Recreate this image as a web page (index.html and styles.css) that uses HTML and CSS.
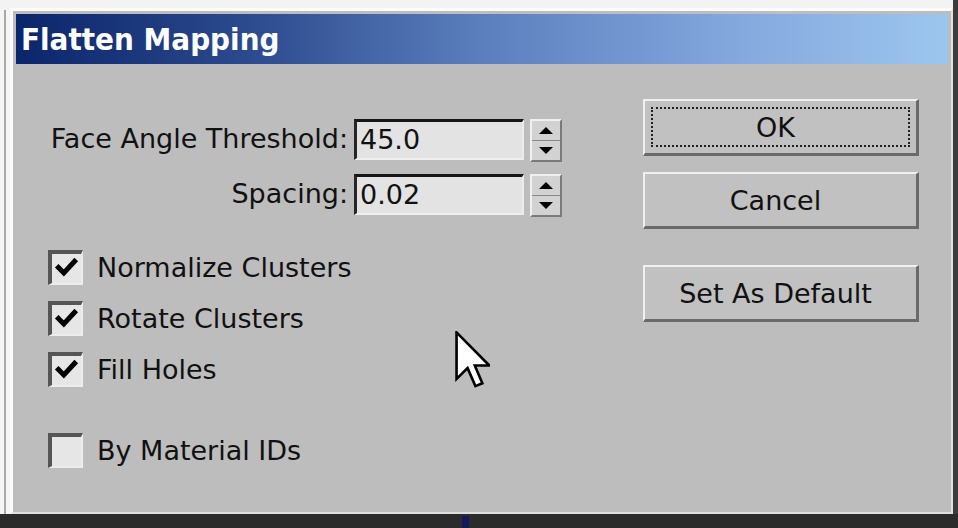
FILE: index.html
```html
<!DOCTYPE html>
<html>
<head>
<meta charset="utf-8">
<title>Flatten Mapping</title>
<link rel="stylesheet" href="styles.css">
</head>
<body>
<div class="screen">
  <div class="main">
    <div class="left-strip"></div>
    <div class="dialog">
      <div class="titlebar"><span class="title">Flatten Mapping</span></div>
      <div class="dialog-body">
        <div class="left-col">
          <div class="form">
            <label class="lbl">Face Angle Threshold:</label>
            <div class="field">45.0</div>
            <div class="spinner">
              <span class="spin-up"><span class="tri-up"></span></span>
              <span class="spin-down"><span class="tri-down"></span></span>
            </div>
            <label class="lbl">Spacing:</label>
            <div class="field">0.02</div>
            <div class="spinner">
              <span class="spin-up"><span class="tri-up"></span></span>
              <span class="spin-down"><span class="tri-down"></span></span>
            </div>
          </div>
          <div class="checks">
            <div class="check-row"><span class="box"><svg viewBox="0 0 14 14" class="tick"><path d="M2.5 6.5 L5.5 9.5 L11.5 3" fill="none" stroke="#000" stroke-width="2.8" stroke-linecap="square"/></svg></span><span class="clabel">Normalize Clusters</span></div>
            <div class="check-row"><span class="box"><svg viewBox="0 0 14 14" class="tick"><path d="M2.5 6.5 L5.5 9.5 L11.5 3" fill="none" stroke="#000" stroke-width="2.8" stroke-linecap="square"/></svg></span><span class="clabel">Rotate Clusters</span></div>
            <div class="check-row"><span class="box"><svg viewBox="0 0 14 14" class="tick"><path d="M2.5 6.5 L5.5 9.5 L11.5 3" fill="none" stroke="#000" stroke-width="2.8" stroke-linecap="square"/></svg></span><span class="clabel">Fill Holes</span></div>
            <div class="check-row spaced"><span class="box"></span><span class="clabel">By Material IDs</span></div>
          </div>
        </div>
        <div class="right-col">
          <button class="btn btn-default"><span class="focus">OK</span></button>
          <button class="btn">Cancel</button>
          <button class="btn btn-gap">Set As Default</button>
        </div>
      </div>
    </div>
    <div class="right-strip"></div>
  </div>
  <div class="taskbar"><span class="task-mark"></span></div>
</div>
<svg class="cursor" viewBox="0 0 12 20" width="35" height="58"><path d="M0.5 0.5 L0.5 16.5 L4.3 12.8 L7 19 L9.4 18 L6.8 11.9 L11.8 11.9 Z" fill="#fff" stroke="#000" stroke-width="0.9" stroke-linejoin="miter"/></svg>
</body>
</html>
```

FILE: styles.css
```css
html, body {
  margin: 0;
  padding: 0;
}
body {
  width: 958px;
  height: 528px;
  overflow: hidden;
  background: #f3f3f3;
  font-family: "DejaVu Sans", sans-serif;
  color: #111;
  position: relative;
}
.screen {
  display: flex;
  flex-direction: column;
  height: 528px;
}
.main {
  display: flex;
  flex: 1;
  min-height: 0;
}
.left-strip {
  width: 10px;
  background: linear-gradient(to right, #f5f5f5 0 4px, #a9a9a9 4px 6px, #f5f5f5 6px 100%);
  background-position: 0 10px;
  background-repeat: no-repeat;
}
.dialog {
  flex: 1;
  margin-top: 8px;
  display: flex;
  flex-direction: column;
  background: #bdbdbd;
  border-top: 3px solid #fbfbfb;
  border-left: 3px solid #fbfbfb;
  border-right: 2px solid #e2e2e2;
  border-bottom: 2px solid #dedede;
  padding: 3px 3px 0 3px;
}
.right-strip {
  width: 5px;
  background: #3c3c3c;
}
.taskbar {
  height: 14px;
  background: #2b2b2b;
  position: relative;
}
.task-mark {
  position: absolute;
  left: 462px;
  top: 2px;
  width: 7px;
  height: 12px;
  background: #121a5c;
}
.titlebar {
  height: 50px;
  background: linear-gradient(to right, #0b256b 0%, #2c4a8e 25%, #5b7fbd 50%, #84a9df 78%, #9dc6ee 100%);
  display: flex;
  align-items: center;
  padding-left: 5px;
}
.title {
  color: #fff;
  font-family: "DejaVu Sans Condensed", "DejaVu Sans", sans-serif;
  font-weight: bold;
  font-size: 31px;
}
.dialog-body {
  flex: 1;
  display: flex;
  justify-content: space-between;
}
.left-col {
  padding-top: 55px;
  padding-left: 32px;
  display: flex;
  flex-direction: column;
}
.form {
  display: grid;
  grid-template-columns: 302px 170px 32px;
  grid-auto-rows: 43px;
  column-gap: 6px;
  row-gap: 12px;
  align-items: start;
  margin-left: -2px;
}
.lbl {
  font-size: 27px;
  text-align: right;
  line-height: 40px;
  white-space: nowrap;
}
.field {
  height: 41px;
  box-sizing: border-box;
  background: #e3e3e3;
  border-top: 3px solid #161616;
  border-left: 3px solid #262626;
  border-right: 2px solid #ececec;
  border-bottom: 2px solid #efefef;
  font-size: 27px;
  line-height: 36px;
  padding-left: 3px;
}
.spinner {
  height: 43px;
  box-sizing: border-box;
  display: flex;
  flex-direction: column;
  border-top: 2px solid #f0f0f0;
  border-left: 2px solid #f0f0f0;
  border-right: 2px solid #7a7a7a;
  border-bottom: 2px solid #7a7a7a;
  background: #d2d2d2;
}
.spin-up, .spin-down {
  flex: 1;
  display: flex;
  align-items: center;
  justify-content: center;
}
.spin-up {
  border-bottom: 1px solid #8a8a8a;
}
.tri-up {
  width: 0;
  height: 0;
  border-left: 7px solid transparent;
  border-right: 7px solid transparent;
  border-bottom: 7px solid #000;
}
.tri-down {
  width: 0;
  height: 0;
  border-left: 7px solid transparent;
  border-right: 7px solid transparent;
  border-top: 7px solid #000;
}
.checks {
  margin-top: 33px;
  display: flex;
  flex-direction: column;
  gap: 16px;
}
.check-row {
  display: flex;
  align-items: center;
  gap: 14px;
  height: 35px;
}
.check-row.spaced {
  margin-top: 30px;
}
.box {
  width: 35px;
  height: 35px;
  box-sizing: border-box;
  background: #e6e6e6;
  border-top: 4px solid #555;
  border-left: 4px solid #555;
  border-right: 2px solid #ededed;
  border-bottom: 2px solid #ededed;
  display: flex;
  align-items: center;
  justify-content: center;
}
.tick {
  width: 25px;
  height: 25px;
}
.clabel {
  font-size: 27px;
  white-space: nowrap;
}
.right-col {
  width: 276px;
  padding-top: 35px;
  padding-right: 29px;
  display: flex;
  flex-direction: column;
  gap: 16px;
}
.btn {
  height: 57px;
  box-sizing: border-box;
  background: #c1c1c1;
  border-top: 2px solid #f0f0f0;
  border-left: 2px solid #f0f0f0;
  border-right: 3px solid #6a6a6a;
  border-bottom: 3px solid #6a6a6a;
  font-family: inherit;
  font-size: 27px;
  color: #111;
  padding: 0 10px 0 0;
  display: flex;
  align-items: center;
  justify-content: center;
}
.btn-default {
  padding: 6px;
}
.focus {
  flex: 1;
  align-self: stretch;
  display: flex;
  align-items: center;
  justify-content: center;
  border: 2px dotted #222;
  padding-right: 10px;
}
.btn-gap {
  margin-top: 20px;
}
.cursor {
  position: absolute;
  left: 455px;
  top: 331px;
}
```
